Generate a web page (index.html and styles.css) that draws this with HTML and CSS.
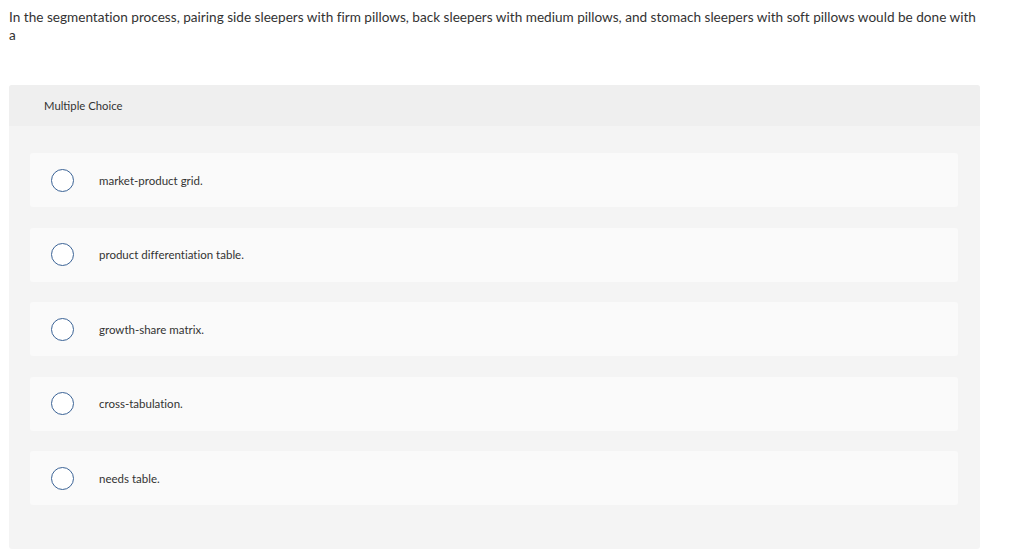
FILE: index.html
```html
<!DOCTYPE html>
<html>
<head>
<meta charset="utf-8">
<link rel="stylesheet" href="styles.css">
</head>
<body>
<div class="page">
  <p class="question">In the segmentation process, pairing side sleepers with firm pillows, back sleepers with medium pillows, and stomach sleepers with soft pillows would be done with a</p>
  <div class="panel">
    <div class="panel-head">Multiple Choice</div>
    <div class="options">
      <div class="option"><span class="radio"></span><span class="label">market-product grid.</span></div>
      <div class="option"><span class="radio"></span><span class="label">product differentiation table.</span></div>
      <div class="option"><span class="radio"></span><span class="label">growth-share matrix.</span></div>
      <div class="option"><span class="radio"></span><span class="label">cross-tabulation.</span></div>
      <div class="option"><span class="radio"></span><span class="label">needs table.</span></div>
    </div>
  </div>
</div>
</body>
</html>
```
FILE: styles.css
```css
html, body { margin: 0; padding: 0; background: #fff; }
body { font-family: "Lato", "Liberation Sans", sans-serif; color: #333; }
.page { padding: 8px 44px 0 9px; }
.question { margin: 0; font-size: 13.6px; line-height: 18px; color: #333; width: 970px; font-variant-ligatures: none; }
.panel { margin-top: 41px; background: #f4f4f4; border-radius: 3px; width: 971px; }
.panel-head { background: #efefef; height: 41px; display: flex; align-items: center; padding-left: 35px; font-size: 11.3px; color: #333; border-radius: 3px 3px 0 0; }
.options { padding: 27px 22px 44px 21px; display: flex; flex-direction: column; gap: 20.5px; }
.option { background: #fafafa; border-radius: 3px; height: 54px; display: flex; align-items: center; padding-left: 21px; }
.radio { width: 21px; height: 21px; border: 1px solid #3b6396; border-radius: 50%; background: #fff; flex: none; }
.label { margin-left: 25px; font-size: 11.5px; color: #333; font-variant-ligatures: none; }
```
